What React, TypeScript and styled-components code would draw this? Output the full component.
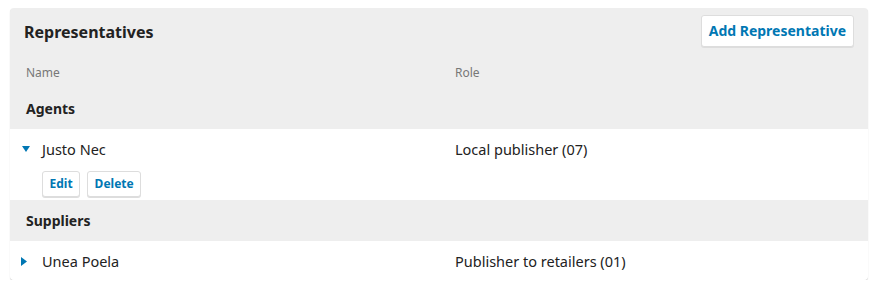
import React from "react";
import styled, { createGlobalStyle } from "styled-components";

const GlobalStyle = createGlobalStyle`
  body {
    margin: 0;
    background: #ffffff;
    font-family: "Noto Sans", "Open Sans", sans-serif;
    color: #222222;
  }
`;

const Page = styled.div`
  padding: 8px 15px 0 10px;
`;

const Panel = styled.section`
  width: 858px;
  background-color: #eeeeee;
  border-radius: 4px;
  overflow: hidden;
  box-shadow: 0 1px 1px rgba(0, 0, 0, 0.2);
`;

const Header = styled.div`
  display: flex;
  justify-content: space-between;
  align-items: center;
  padding: 7px 14px 0 14px;
`;

const Title = styled.h2`
  margin: 2px 0 0 0;
  font-size: 16px;
  font-weight: 700;
  line-height: 20px;
  color: #222222;
`;

const Button = styled.button<{ $size?: "small" | "normal" }>`
  background: #ffffff;
  border: 1px solid #dddddd;
  border-radius: 3px;
  box-shadow: 0 1px 0 #dddddd;
  color: #0077b3;
  font-family: "Noto Sans", "Open Sans", sans-serif;
  font-weight: 700;
  cursor: pointer;
  font-size: ${({ $size }) => ($size === "small" ? "12px" : "14px")};
  height: ${({ $size }) => ($size === "small" ? "26px" : "32px")};
  padding: ${({ $size }) => ($size === "small" ? "0 6.5px" : "0 7px")};
  line-height: 1;
`;

const Columns = styled.div`
  display: grid;
  grid-template-columns: 429px 1fr;
  padding: 18px 16px 7px 16px;
  font-size: 12px;
  line-height: 16px;
  color: #777777;
`;

const GroupLabel = styled.div`
  height: 41px;
  display: flex;
  align-items: center;
  padding: 0 16px;
  font-size: 14px;
  font-weight: 700;
  color: #222222;
`;

const Row = styled.div<{ $last?: boolean }>`
  background: #ffffff;
  padding: 10px 16px ${({ $last }) => ($last ? "9px" : "3px")} 0;
`;

const RowMain = styled.div`
  display: grid;
  grid-template-columns: 32px 413px 1fr;
  align-items: center;
  font-size: 14.5px;
  line-height: 20px;
  color: #222222;
`;

const Toggle = styled.span<{ $open?: boolean }>`
  display: flex;
  align-items: center;
  padding-left: ${({ $open }) => ($open ? "12px" : "11px")};
  color: #0077b3;
`;

const Actions = styled.div`
  display: flex;
  gap: 7px;
  padding: 12px 0 0 32px;
`;

const Caret: React.FC<{ open?: boolean }> = ({ open }) =>
  open ? (
    <svg width="8" height="6" viewBox="0 0 8 6" fill="currentColor">
      <polygon points="0,0 8,0 4,6" />
    </svg>
  ) : (
    <svg width="6" height="9" viewBox="0 0 6 9" fill="currentColor">
      <polygon points="0,0 6,4.5 0,9" />
    </svg>
  );

interface Rep {
  name: string;
  role: string;
  open?: boolean;
}

const groups: { label: string; reps: Rep[] }[] = [
  { label: "Agents", reps: [{ name: "Justo Nec", role: "Local publisher (07)", open: true }] },
  { label: "Suppliers", reps: [{ name: "Unea Poela", role: "Publisher to retailers (01)" }] },
];

export default function App() {
  return (
    <>
      <GlobalStyle />
      <Page>
        <Panel>
          <Header>
            <Title>Representatives</Title>
            <Button>Add Representative</Button>
          </Header>
          <Columns>
            <span>Name</span>
            <span>Role</span>
          </Columns>
          {groups.map((g, gi) => (
            <React.Fragment key={g.label}>
              <GroupLabel>{g.label}</GroupLabel>
              {g.reps.map((r) => (
                <Row key={r.name} $last={gi === groups.length - 1}>
                  <RowMain>
                    <Toggle $open={r.open}>
                      <Caret open={r.open} />
                    </Toggle>
                    <span>{r.name}</span>
                    <span>{r.role}</span>
                  </RowMain>
                  {r.open && (
                    <Actions>
                      <Button $size="small">Edit</Button>
                      <Button $size="small">Delete</Button>
                    </Actions>
                  )}
                </Row>
              ))}
            </React.Fragment>
          ))}
        </Panel>
      </Page>
    </>
  );
}
